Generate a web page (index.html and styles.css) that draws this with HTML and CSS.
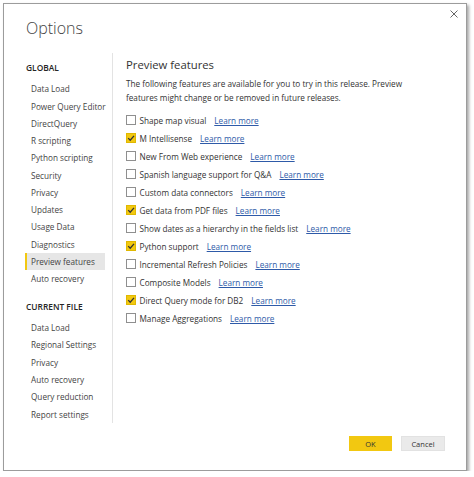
FILE: index.html
```html
<!DOCTYPE html>
<html lang="en">
<head>
<meta charset="utf-8">
<title>Options</title>
<link rel="stylesheet" href="styles.css">
</head>
<body>
<div class="dialog">
  <header class="header">
    <h1 class="title">Options</h1>
    <button class="close" aria-label="Close"><svg width="8" height="8" viewBox="0 0 8 8"><path d="M0.5 0.5L7.5 7.5M7.5 0.5L0.5 7.5" stroke="#555" stroke-width="0.9" fill="none"/></svg></button>
  </header>
  <div class="body">
    <nav class="nav">
      <div class="nav-section">GLOBAL</div>
      <ul class="nav-list">
        <li class="nav-item">Data Load</li>
        <li class="nav-item">Power Query Editor</li>
        <li class="nav-item">DirectQuery</li>
        <li class="nav-item">R scripting</li>
        <li class="nav-item">Python scripting</li>
        <li class="nav-item">Security</li>
        <li class="nav-item">Privacy</li>
        <li class="nav-item">Updates</li>
        <li class="nav-item">Usage Data</li>
        <li class="nav-item">Diagnostics</li>
        <li class="nav-item active">Preview features</li>
        <li class="nav-item">Auto recovery</li>
      </ul>
      <div class="nav-section second">CURRENT FILE</div>
      <ul class="nav-list">
        <li class="nav-item">Data Load</li>
        <li class="nav-item">Regional Settings</li>
        <li class="nav-item">Privacy</li>
        <li class="nav-item">Auto recovery</li>
        <li class="nav-item">Query reduction</li>
        <li class="nav-item">Report settings</li>
      </ul>
    </nav>
    <main class="main">
      <h2 class="heading">Preview features</h2>
      <p class="desc">The following features are available for you to try in this release. Preview<br>features might change or be removed in future releases.</p>
      <ul class="features">
        <li class="feature"><span class="cb"></span><span class="label">Shape map visual</span><a class="link" href="#">Learn more</a></li>
        <li class="feature"><span class="cb checked"><svg width="10" height="10" viewBox="0 0 10 10"><path d="M2.2 5.1L4.2 7.2L8 2.8" stroke="#333" stroke-width="1.3" fill="none"/></svg></span><span class="label">M Intellisense</span><a class="link" href="#">Learn more</a></li>
        <li class="feature"><span class="cb"></span><span class="label">New From Web experience</span><a class="link" href="#">Learn more</a></li>
        <li class="feature"><span class="cb"></span><span class="label">Spanish language support for Q&amp;A</span><a class="link" href="#">Learn more</a></li>
        <li class="feature"><span class="cb"></span><span class="label">Custom data connectors</span><a class="link" href="#">Learn more</a></li>
        <li class="feature"><span class="cb checked"><svg width="10" height="10" viewBox="0 0 10 10"><path d="M2.2 5.1L4.2 7.2L8 2.8" stroke="#333" stroke-width="1.3" fill="none"/></svg></span><span class="label">Get data from PDF files</span><a class="link" href="#">Learn more</a></li>
        <li class="feature"><span class="cb"></span><span class="label">Show dates as a hierarchy in the fields list</span><a class="link" href="#">Learn more</a></li>
        <li class="feature"><span class="cb checked"><svg width="10" height="10" viewBox="0 0 10 10"><path d="M2.2 5.1L4.2 7.2L8 2.8" stroke="#333" stroke-width="1.3" fill="none"/></svg></span><span class="label">Python support</span><a class="link" href="#">Learn more</a></li>
        <li class="feature"><span class="cb"></span><span class="label">Incremental Refresh Policies</span><a class="link" href="#">Learn more</a></li>
        <li class="feature"><span class="cb"></span><span class="label">Composite Models</span><a class="link" href="#">Learn more</a></li>
        <li class="feature"><span class="cb checked"><svg width="10" height="10" viewBox="0 0 10 10"><path d="M2.2 5.1L4.2 7.2L8 2.8" stroke="#333" stroke-width="1.3" fill="none"/></svg></span><span class="label">Direct Query mode for DB2</span><a class="link" href="#">Learn more</a></li>
        <li class="feature"><span class="cb"></span><span class="label">Manage Aggregations</span><a class="link" href="#">Learn more</a></li>
      </ul>
    </main>
  </div>
  <footer class="footer">
    <button class="btn btn-ok">OK</button>
    <button class="btn btn-cancel">Cancel</button>
  </footer>
</div>
</body>
</html>
```
FILE: styles.css
```css
html, body {
  margin: 0;
  padding: 0;
  background: #ffffff;
}

.dialog {
  margin: 3px 0 0 3px;
  width: 464px;
  height: 468px;
  box-sizing: border-box;
  border: 1px solid #9c9c9c;
  background: #ffffff;
  box-shadow: 2px 2px 3px rgba(0, 0, 0, 0.35);
  display: flex;
  flex-direction: column;
  font-family: "Open Sans", "Noto Sans", sans-serif;
  color: #333333;
  font-size: 8.2px;
}

.header {
  display: flex;
  justify-content: space-between;
  align-items: flex-start;
  padding-left: 22px;
  padding-right: 8px;
}

.title {
  margin: 14px 0 0 0;
  font-size: 16px;
  line-height: 20px;
  font-weight: 300;
  color: #444444;
}

.close {
  margin-top: 6px;
  padding: 0;
  border: 0;
  background: none;
  width: 8px;
  height: 8px;
  display: flex;
}

.body {
  display: flex;
  margin-top: 15px;
}

.nav {
  width: 109px;
  box-sizing: border-box;
  border-right: 1px solid #e3e3e3;
  padding-top: 8px;
}

.nav-section {
  padding-left: 22px;
  font-weight: 600;
  font-size: 8.4px;
  line-height: 14px;
  color: #252525;
  margin-bottom: 5.3px;
}

.nav-section.second {
  margin-top: 12.4px;
}

.nav-list {
  list-style: none;
  margin: 0;
  padding: 0;
}

.nav-item {
  margin-left: 21px;
  width: 80px;
  box-sizing: border-box;
  border-left: 2px solid transparent;
  padding-left: 4px;
  height: 17.27px;
  line-height: 17.27px;
  color: #444444;
  white-space: nowrap;
}

.nav-item.active {
  background: #e6e6e6;
  border-left-color: #f2c811;
}

.main {
  flex: 1;
  padding-left: 13px;
  padding-top: 4px;
}

.heading {
  margin: 0;
  font-size: 11.3px;
  line-height: 16px;
  font-weight: 400;
  color: #333333;
}

.desc {
  margin: 3.7px 0 0 0;
  line-height: 14.5px;
  color: #333333;
}

.features {
  list-style: none;
  margin: 5.5px 0 0 0;
  padding: 0;
}

.feature {
  display: flex;
  align-items: center;
  height: 18px;
}

.cb {
  width: 10px;
  height: 10px;
  box-sizing: border-box;
  border: 1px solid #8f8f8f;
  background: #ffffff;
  margin-right: 3.5px;
  display: flex;
}

.cb.checked {
  background: #f2c811;
  border-color: #e0b800;
}

.cb.checked svg {
  margin: -1px;
}

.label {
  margin-right: 8px;
  white-space: nowrap;
}

.link {
  color: #2e5aa8;
  text-decoration: underline;
  white-space: nowrap;
}

.footer {
  margin-top: auto;
  display: flex;
  justify-content: flex-end;
  gap: 9px;
  padding-right: 21px;
  padding-bottom: 19px;
}

.btn {
  height: 15px;
  padding: 0;
  border: 0;
  font-family: "Open Sans", "Noto Sans", sans-serif;
  font-size: 7.5px;
  color: #333333;
}

.btn-ok {
  width: 43px;
  background: #f2c811;
}

.btn-cancel {
  width: 44px;
  background: #eaeaea;
  border: 1px solid #e2e2e2;
  box-sizing: border-box;
}
```
